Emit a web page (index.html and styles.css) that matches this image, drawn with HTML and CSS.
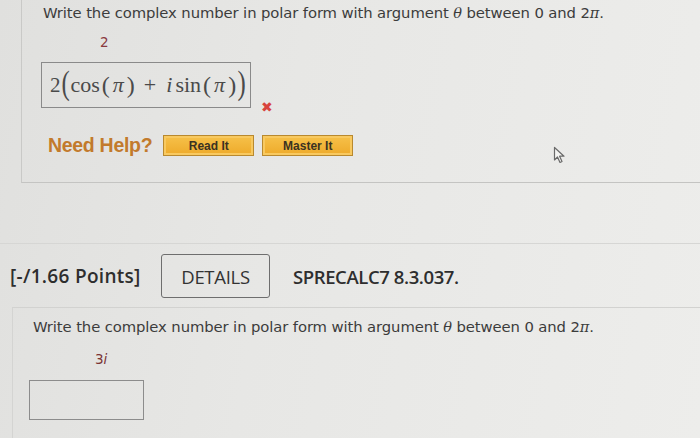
FILE: index.html
```html
<!DOCTYPE html>
<html>
<head>
<meta charset="utf-8">
<link rel="stylesheet" href="styles.css">
</head>
<body>
<div class="page">
  <div class="card top">
    <p class="q">Write the complex number in polar form with argument <i class="v">θ</i> between 0 and 2<i class="v">π</i>.</p>
    <p class="given">2</p>
    <div class="answer-row">
      <div class="answer"><span class="m">2</span><span class="big">(</span><span class="fn">cos</span><span class="p">(</span><i class="mi">π</i><span class="p">)</span><span class="op">+</span><i class="mi">i</i><span class="fn">sin</span><span class="p">(</span><i class="mi">π</i><span class="p">)</span><span class="big">)</span></div>
      <span class="wrong">✖</span>
    </div>
    <div class="help">
      <span class="need">Need Help?</span>
      <button class="btn">Read It</button>
      <button class="btn">Master It</button>
      <svg class="cursor" width="14" height="18" viewBox="0 0 14 18"><path d="M1.5 1.5 L1.5 14 L4.5 11 L7 16.5 L9 15.5 L6.6 10.2 L11 10.2 Z" fill="#f4f4f2" stroke="#6a6a6a" stroke-width="1.2" stroke-linejoin="round"/></svg>
    </div>
  </div>
  <div class="sep"></div>
  <div class="head">
    <span class="pts">[-/1.66 Points]</span>
    <span class="details">DETAILS</span>
    <span class="code">SPRECALC7 8.3.037.</span>
  </div>
  <div class="card second">
    <p class="q">Write the complex number in polar form with argument <i class="v">θ</i> between 0 and 2<i class="v">π</i>.</p>
    <p class="given g2">3<i>i</i></p>
    <div class="input"></div>
  </div>
</div>
</body>
</html>
```
FILE: styles.css
```css
html, body { margin: 0; padding: 0; }
body {
  width: 700px; height: 438px; overflow: hidden;
  background: linear-gradient(100deg, #e0e0de 0%, #e7e7e5 40%, #ededeb 100%);
  font-family: "DejaVu Sans", Verdana, sans-serif;
  color: #3a3a3a;
}
.page { position: relative; }
p { margin: 0; }
.card.top {
  margin-left: 21px;
  height: 183px;
  box-sizing: border-box;
  border-left: 1px solid #c9c9c7;
  border-bottom: 1px solid #c4c4c2;
  padding: 4px 0 0 21px;
}
.q { font-size: 14.8px; line-height: 18px; letter-spacing: -0.1px; color: #3c3c3c; }
.v { font-family: "DejaVu Serif", serif; font-size: 14.5px; }
.given { font-size: 13.5px; line-height: 18px; color: #8a3a3e; margin: 11px 0 0 57px; }
.answer-row { display: flex; align-items: flex-end; margin: 11px 0 0 -2px; }
.answer {
  width: 210px; height: 46px; box-sizing: border-box;
  border: 1px solid #8a8a8a;
  display: flex; align-items: center;
  padding-left: 8px;
  font-family: "Liberation Serif", serif;
  font-size: 21px; color: #4a4a4a;
}
.answer .m { margin-right: 0; }
.answer .big { font-size: 33px; line-height: 1; transform: scaleX(0.75); font-weight: 300; margin: -3px -1px 0; }
.answer .fn { font-size: 22px; margin: 0 1px; }
.answer .p { font-size: 24px; margin: 0 1px; }
.answer .mi { font-size: 22px; margin: 0 2px; }
.answer .op { font-size: 22px; margin: 0 8px; }
.wrong { color: #d8443e; font-size: 14px; margin-left: 10px; margin-bottom: -7px; }
.help { display: flex; align-items: center; margin: 19px 0 0 5px; }
.need { font-family: "Liberation Sans", Arial, sans-serif; font-weight: bold; font-size: 19.5px; color: #c27a2c; letter-spacing: -0.3px; margin-right: 11px; }
.btn {
  font-family: "Liberation Sans", Arial, sans-serif; font-weight: bold; font-size: 12px; color: #3b3222;
  width: 91px; height: 21px; padding: 0; margin-right: 8px;
  background: linear-gradient(#f6c14a, #eeaa2a);
  border: 1px solid #b9892e;
  box-shadow: inset 0 0 0 2px #f8c960;
}
.cursor { margin-left: 192px; margin-top: 19px; }
.sep { height: 0; border-top: 1px solid #d6d6d4; margin-top: 60px; }
.head { display: flex; align-items: center; padding: 10px 0 9px 10px; height: 44px; }
.pts { font-family: "Open Sans", sans-serif; font-weight: 600; font-size: 19px; color: #2e2e2e; letter-spacing: 0.3px; width: 151px; }
.details {
  font-family: "Open Sans", sans-serif; font-size: 18.5px; color: #333;
  width: 109px; height: 44px; box-sizing: border-box;
  border: 1.5px solid #6e6e6e; border-radius: 3px;
  display: flex; align-items: center; justify-content: center;
  letter-spacing: -0.3px;
}
.code { font-family: "Open Sans", sans-serif; font-weight: 600; font-size: 18.5px; color: #2e2e2e; margin-left: 23px; letter-spacing: -0.4px; }
.card.second {
  margin-left: 12px;
  border-top: 1px solid #d2d2d0;
  border-left: 1px solid #d4d4d2;
  padding: 10px 0 0 20px;
  height: 140px;
}
.g2 { margin: 14px 0 0 62px; color: #7a3434; }
.g2 i { font-style: italic; }
.input { width: 115px; height: 40px; box-sizing: border-box; border: 1px solid #8c8c8c; margin: 12px 0 0 -4px; }
```
